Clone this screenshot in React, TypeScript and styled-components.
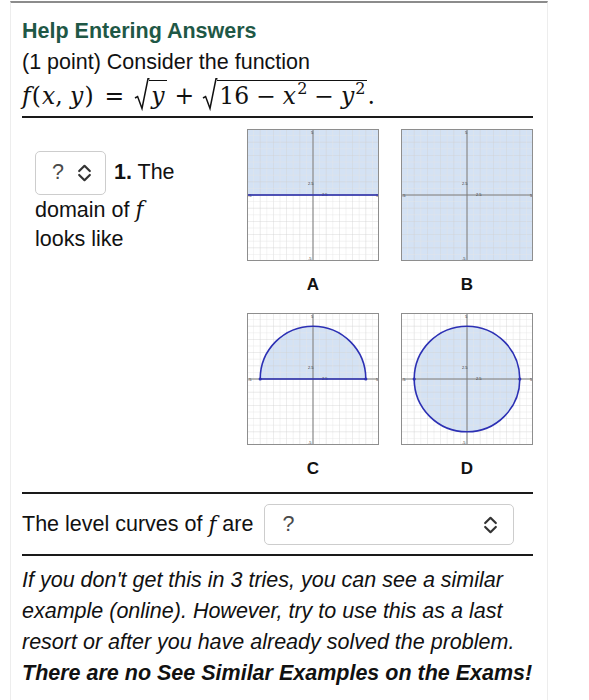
import React from "react";
import styled, { createGlobalStyle } from "styled-components";

const Global = createGlobalStyle`
  html, body { margin: 0; padding: 0; background: #ffffff; }
  body {
    font-family: "Liberation Sans", Arial, Helvetica, sans-serif;
    color: #111111;
  }
`;

const MATH = `"DejaVu Serif", "Liberation Serif", serif`;

const Card = styled.div`
  margin: 1px 0 0 10px;
  width: 538px;
  min-height: 699px;
  box-sizing: border-box;
  border-top: 2px solid #8c8c8c;
  border-left: 1px solid #ededed;
  border-right: 1px solid #ededed;
  padding: 13px 14px 0 11px;
  font-size: 21.5px;
  line-height: 31px;
`;

const Heading = styled.div`
  color: #1f5846;
  font-weight: 700;
`;

const Intro = styled.div``;

const FormulaLine = styled.div`
  height: 33px;
  line-height: 33px;
  font-family: ${MATH};
  font-size: 23.5px;
  white-space: nowrap;
`;

const Mi = styled.span`
  font-family: ${MATH};
  font-style: italic;
`;

const Mn = styled.span`
  font-family: ${MATH};
`;

const Mo = styled.span<{ $space?: number }>`
  font-family: ${MATH};
  padding: 0 ${(p) => p.$space ?? 0}px;
`;

const Sup = styled.sup`
  font-size: 16px;
  line-height: 0;
  vertical-align: 10px;
  font-family: ${MATH};
  padding-left: 1px;
`;

const Radical = styled.svg`
  display: inline-block;
  width: 15px;
  height: 32px;
  vertical-align: -6px;
  overflow: visible;
`;

const Radicand = styled.span`
  display: inline-block;
  line-height: 26px;
  padding: 2px 2px 0 2px;
  border-top: 1.5px solid #111;
`;

const Rule = styled.div<{ $top?: number }>`
  height: 2px;
  background: #1a1a1a;
  margin-top: ${(p) => p.$top ?? 0}px;
`;

const Problem = styled.div`
  display: flex;
  align-items: flex-start;
`;

const LeftCol = styled.div`
  width: 225px;
  box-sizing: border-box;
  padding: 33px 0 0 13px;
  line-height: 29px;
`;

const LeftText = styled.div`
  width: 158px;
`;

const SelectBox = styled.span<{ $w: number; $h: number }>`
  display: inline-flex;
  align-items: center;
  justify-content: space-between;
  box-sizing: border-box;
  width: ${(p) => p.$w}px;
  height: ${(p) => p.$h}px;
  border: 1px solid #cdcdcd;
  border-radius: 5px;
  background: #fff;
  color: #4a4a4a;
  font-size: 21.5px;
  line-height: 1;
  vertical-align: middle;
`;

const InlineSelect = styled(SelectBox)`
  padding: 0 13px 0 16px;
  margin-right: 8px;
`;

const WideSelect = styled(SelectBox)`
  padding: 0 15px 0 17px;
  margin-left: 11px;
`;

const GraphGrid = styled.div`
  display: grid;
  grid-template-columns: 132px 132px;
  column-gap: 22px;
  row-gap: 18px;
  margin-top: 11px;
  padding-bottom: 13px;
`;

const GraphCell = styled.div`
  display: flex;
  flex-direction: column;
  align-items: center;
`;

const GraphLabel = styled.div`
  margin-top: 14px;
  font-size: 17px;
  line-height: 20px;
  font-weight: 700;
  color: #111;
`;

const LevelRow = styled.div`
  display: flex;
  align-items: center;
  padding: 10px 0 9px;
`;

const Note = styled.div`
  margin-top: 9px;
  font-style: italic;
`;

const NoteStrong = styled.div`
  font-weight: 700;
`;

const Chevrons = () => (
  <svg width="15" height="18" viewBox="0 0 15 18" fill="none">
    <path
      d="M2.2 7 L7.5 1.8 L12.8 7 M2.2 11 L7.5 16.2 L12.8 11"
      stroke="#333"
      strokeWidth="2.2"
      strokeLinecap="round"
      strokeLinejoin="round"
    />
  </svg>
);

const Sqrt: React.FC<{ children: React.ReactNode }> = ({ children }) => (
  <>
    <Radical viewBox="0 0 15 32" preserveAspectRatio="none">
      <path
        d="M1 20 L3.6 18.5 L8 30.5 L14 0.75 L15.5 0.75"
        fill="none"
        stroke="#111"
        strokeWidth="1.5"
        strokeLinejoin="miter"
      />
    </Radical>
    <Radicand>{children}</Radicand>
  </>
);

type Kind = "upper" | "all" | "semi" | "disk";
const S = 132;
const px = (v: number) => ((v + 5) / 10) * S;
const py = (v: number) => ((5 - v) / 10) * S;

const Graph: React.FC<{ kind: Kind }> = ({ kind }) => {
  const fill = "#d4e2f4";
  const curve = "#2c30b4";
  const r = (4 / 10) * S;
  const cx = px(0);
  const cy = py(0);
  const lines: React.ReactNode[] = [];
  for (let i = 1; i < 20; i++) {
    const p = (i / 20) * S;
    const major = i % 2 === 0;
    const stroke = major ? "#d2d2d2" : "#e6e6e6";
    lines.push(
      <line key={"v" + i} x1={p} y1={0} x2={p} y2={S} stroke={stroke} strokeWidth={0.6} opacity={0.75} />,
      <line key={"h" + i} x1={0} y1={p} x2={S} y2={p} stroke={stroke} strokeWidth={0.6} opacity={0.75} />
    );
  }
  return (
    <svg width={S} height={S} viewBox={`0 0 ${S} ${S}`}>
      <rect x={0} y={0} width={S} height={S} fill="#fff" />
      {kind === "upper" && <rect x={0} y={0} width={S} height={cy} fill={fill} />}
      {kind === "all" && <rect x={0} y={0} width={S} height={S} fill={fill} />}
      {kind === "semi" && (
        <path d={`M${cx - r} ${cy} A${r} ${r} 0 0 1 ${cx + r} ${cy} Z`} fill={fill} />
      )}
      {kind === "disk" && <circle cx={cx} cy={cy} r={r} fill={fill} />}
      {lines}
      <line x1={cx} y1={0} x2={cx} y2={S} stroke="#7d7d7d" strokeWidth={1} />
      <line x1={0} y1={cy} x2={S} y2={cy} stroke="#7d7d7d" strokeWidth={1} />
      <g fontFamily="Liberation Sans, Arial, sans-serif" fontSize="4" fill="#333">
        <text x={cx - 2} y={5}>5</text>
        <text x={cx - 5} y={S - 1}>-5</text>
        <text x={1} y={cy + 1.5}>-5</text>
        <text x={S - 3} y={cy + 1.5}>5</text>
        <text x={cx - 5} y={cy - 10}>2.5</text>
        <text x={cx + 9} y={cy + 1}>2.5</text>
      </g>
      {kind === "upper" && (
        <line x1={0} y1={cy} x2={S} y2={cy} stroke={curve} strokeWidth={1.6} />
      )}
      {kind === "semi" && (
        <>
          <path d={`M${cx - r} ${cy} A${r} ${r} 0 0 1 ${cx + r} ${cy} Z`} fill="none" stroke={curve} strokeWidth={1.6} />
          <circle cx={cx - r} cy={cy} r={1.6} fill={curve} />
          <circle cx={cx + r} cy={cy} r={1.6} fill={curve} />
        </>
      )}
      {kind === "disk" && (
        <>
          <circle cx={cx} cy={cy} r={r} fill="none" stroke={curve} strokeWidth={1.6} />
          <circle cx={cx - r} cy={cy} r={1.6} fill={curve} />
          <circle cx={cx + r} cy={cy} r={1.6} fill={curve} />
        </>
      )}
      <rect x={0.5} y={0.5} width={S - 1} height={S - 1} fill="none" stroke="#8e8e8e" strokeWidth={1} />
    </svg>
  );
};

const graphs: { kind: Kind; label: string }[] = [
  { kind: "upper", label: "A" },
  { kind: "all", label: "B" },
  { kind: "semi", label: "C" },
  { kind: "disk", label: "D" },
];

export default function App() {
  return (
    <>
      <Global />
      <Card>
        <Heading>Help Entering Answers</Heading>
        <Intro>(1 point) Consider the function</Intro>
        <FormulaLine>
          <Mi>f</Mi>
          <Mo $space={1}>(</Mo>
          <Mi>x</Mi>
          <Mo $space={0}>,</Mo> <Mi>y</Mi>
          <Mo $space={1}>)</Mo>
          <Mo $space={10}>=</Mo>
          <Sqrt>
            <Mi>y</Mi>
          </Sqrt>
          <Mo $space={8}>+</Mo>
          <Sqrt>
            <Mn>16</Mn>
            <Mo $space={7}>−</Mo>
            <Mi>x</Mi>
            <Sup>2</Sup>
            <Mo $space={7}>−</Mo>
            <Mi>y</Mi>
            <Sup>2</Sup>
          </Sqrt>
          <Mo>.</Mo>
        </FormulaLine>
        <Rule $top={5} />
        <Problem>
          <LeftCol>
            <LeftText>
              <InlineSelect $w={71} $h={44}>
                <span>?</span>
                <Chevrons />
              </InlineSelect>
              <b>1.</b> The domain of <Mi>f</Mi> looks like
            </LeftText>
          </LeftCol>
          <GraphGrid>
            {graphs.map((g) => (
              <GraphCell key={g.label}>
                <Graph kind={g.kind} />
                <GraphLabel>{g.label}</GraphLabel>
              </GraphCell>
            ))}
          </GraphGrid>
        </Problem>
        <Rule />
        <LevelRow>
          The level curves of&nbsp;<Mi>f</Mi>&nbsp;are
          <WideSelect $w={250} $h={41}>
            <span>?</span>
            <Chevrons />
          </WideSelect>
        </LevelRow>
        <Rule />
        <Note>
          If you don't get this in 3 tries, you can see a similar example
          (online). However, try to use this as a last resort or after you have
          already solved the problem.
          <NoteStrong>There are no See Similar Examples on the Exams!</NoteStrong>
        </Note>
      </Card>
    </>
  );
}
